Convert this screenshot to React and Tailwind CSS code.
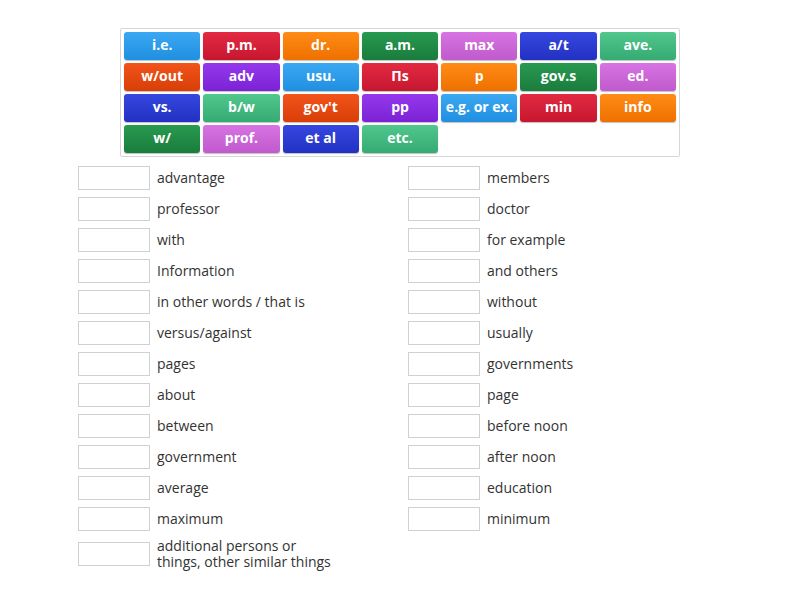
const COLORS = {
  blue: 'bg-linear-to-b from-[#3aa8f2] to-[#1f8fe0]',
  red: 'bg-linear-to-b from-[#e22a42] to-[#c6162f]',
  orange: 'bg-linear-to-b from-[#ff8c15] to-[#ee7000]',
  green: 'bg-linear-to-b from-[#289a50] to-[#1a7c3d]',
  pink: 'bg-linear-to-b from-[#d773e2] to-[#c05acd]',
  navy: 'bg-linear-to-b from-[#3647e0] to-[#2231c2]',
  teal: 'bg-linear-to-b from-[#50c78d] to-[#35ab74]',
  flame: 'bg-linear-to-b from-[#f2541a] to-[#d83e06]',
  purple: 'bg-linear-to-b from-[#9438ec] to-[#7c22d6]',
}

const tiles = [
  ['i.e.', 'blue'], ['p.m.', 'red'], ['dr.', 'orange'], ['a.m.', 'green'], ['max', 'pink'], ['a/t', 'navy'], ['ave.', 'teal'],
  ['w/out', 'flame'], ['adv', 'purple'], ['usu.', 'blue'], ['Πs', 'red'], ['p', 'orange'], ['gov.s', 'green'], ['ed.', 'pink'],
  ['vs.', 'navy'], ['b/w', 'teal'], ["gov't", 'flame'], ['pp', 'purple'], ['e.g. or ex.', 'blue'], ['min', 'red'], ['info', 'orange'],
  ['w/', 'green'], ['prof.', 'pink'], ['et al', 'navy'], ['etc.', 'teal'],
]

const left = [
  'advantage',
  'professor',
  'with',
  'Information',
  'in other words / that is',
  'versus/against',
  'pages',
  'about',
  'between',
  'government',
  'average',
  'maximum',
  'additional persons or things, other similar things',
]

const right = [
  'members',
  'doctor',
  'for example',
  'and others',
  'without',
  'usually',
  'governments',
  'page',
  'before noon',
  'after noon',
  'education',
  'minimum',
]

function Row({ text }) {
  return (
    <div className="flex items-center">
      <div className="w-[72px] h-[24px] shrink-0 border border-[#d0d0d0] bg-white" />
      <p className="ml-[7px] w-[180px] text-[14px] leading-[16px] text-[#333]">{text}</p>
    </div>
  )
}

export default function App() {
  return (
    <div className="w-[800px] h-[600px] bg-white font-['Open_Sans',sans-serif] overflow-hidden">
      {/* Tiles */}
      <div className="mx-auto mt-[28px] w-[560px] border border-[#d6d6d6] rounded-[2px] p-[3px] grid grid-cols-7 gap-[3px]">
        {tiles.map(([label, color]) => (
          <div
            key={label}
            className={`h-[28px] pb-[3px] rounded-[3px] flex items-center justify-center text-white font-bold text-[14px] shadow-[0_1px_1px_rgba(0,0,0,0.25)] ${COLORS[color]}`}
          >
            {label}
          </div>
        ))}
      </div>

      {/* Lists */}
      <div className="flex pl-[78px] mt-[9px]">
        <div className="w-[330px] flex flex-col gap-[7px]">
          {left.map((t) => (
            <Row key={t} text={t} />
          ))}
        </div>
        <div className="w-[330px] flex flex-col gap-[7px]">
          {right.map((t) => (
            <Row key={t} text={t} />
          ))}
        </div>
      </div>
    </div>
  )
}
